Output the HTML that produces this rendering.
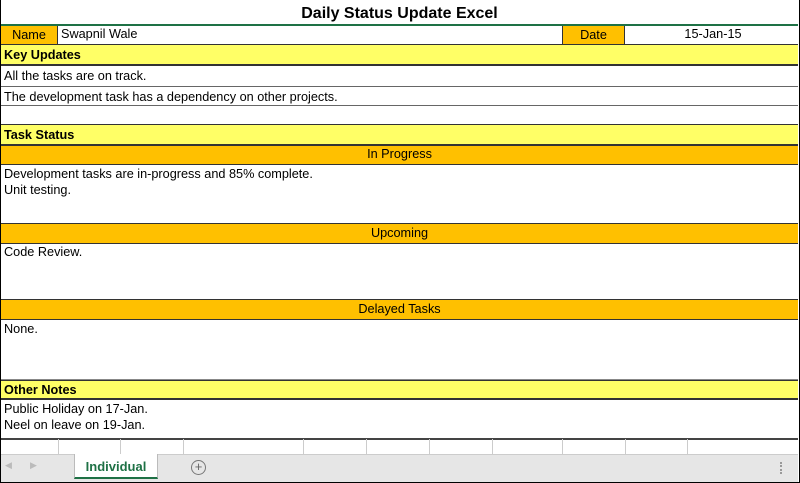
<!DOCTYPE html>
<html><head><style>
body{margin:0;width:800px;height:483px;overflow:hidden;background:#fff;font-family:"Liberation Sans",Arial,sans-serif;position:relative}
div{position:absolute;box-sizing:border-box}
.t{font-size:12.7px;color:#000;line-height:16px;padding-left:3px}
.y{background:#ffff66;font-weight:bold;font-size:12.7px;padding-left:3px;line-height:20px;left:1px;width:797px;border-bottom:2px solid #333}
.o{background:#ffc000;font-size:12.7px;text-align:center;line-height:19px;left:1px;width:797px;border-bottom:1px solid #333}
.l{left:1px;width:797px;height:1px;background:#333}
.g{top:439px;height:16px;width:1px;background:#ccc}
</style></head><body>
<div style="left:0;top:0;width:800px;height:483px;border:1px solid #000;border-top:none"></div>
<div style="left:1px;top:0;width:797px;height:25px;text-align:center;font-weight:bold;font-size:16px;line-height:28px">Daily Status Update Excel</div>
<div style="left:1px;top:24px;width:797px;height:2px;background:#1e7145"></div>
<div style="left:1px;top:26px;width:57px;height:19px;background:#ffc000;font-size:12.7px;text-align:center;line-height:19px;border-right:1px solid #333">Name</div>
<div class="t" style="left:58px;top:26px">Swapnil Wale</div>
<div style="left:562px;top:26px;width:63px;height:19px;background:#ffc000;font-size:12.7px;text-align:center;line-height:19px;border-left:1px solid #333;border-right:1px solid #333">Date</div>
<div class="t" style="left:625px;top:26px;width:173px;text-align:center">15-Jan-15</div>
<div class="l" style="top:44px"></div>
<div class="y" style="top:45px;height:21px">Key Updates</div>
<div class="t" style="left:1px;top:68px">All the tasks are on track.</div>
<div class="l" style="top:86px;background:#666"></div>
<div class="t" style="left:1px;top:89px">The development task has a dependency on other projects.</div>
<div class="l" style="top:105px;background:#666"></div>
<div class="l" style="top:124px"></div>
<div class="y" style="top:125px;height:21px">Task Status</div>
<div class="o" style="top:146px;height:19px;line-height:17px">In Progress</div>
<div class="t" style="left:1px;top:166px">Development tasks are in-progress and 85% complete.<br>Unit testing.</div>
<div class="l" style="top:223px"></div>
<div class="o" style="top:224px;height:20px">Upcoming</div>
<div class="t" style="left:1px;top:244px">Code Review.</div>
<div class="l" style="top:299px"></div>
<div class="o" style="top:300px;height:20px">Delayed Tasks</div>
<div class="t" style="left:1px;top:321px">None.</div>
<div class="l" style="top:379px;background:#888"></div>
<div class="y" style="top:380px;height:20px;border-top:1px solid #333;line-height:19px">Other Notes</div>
<div class="t" style="left:1px;top:401px">Public Holiday on 17-Jan.<br>Neel on leave on 19-Jan.</div>
<div class="l" style="top:438px;height:2px;background:#444"></div>
<div class="g" style="left:58px"></div><div class="g" style="left:120px"></div><div class="g" style="left:183px"></div><div class="g" style="left:303px"></div><div class="g" style="left:366px"></div><div class="g" style="left:429px"></div><div class="g" style="left:492px"></div><div class="g" style="left:562px"></div><div class="g" style="left:625px"></div><div class="g" style="left:687px"></div>
<div style="left:1px;top:454px;width:797px;height:28px;background:#e6e6e6;border-top:1px solid #ccc"></div>
<div style="left:5px;top:460px;font-size:9px;color:#bbb">◀</div>
<div style="left:30px;top:460px;font-size:9px;color:#bbb">▶</div>
<div style="left:74px;top:454px;width:84px;height:25px;background:#fff;border-left:1px solid #bbb;border-right:1px solid #bbb;border-bottom:2px solid #1e7145;color:#1e7145;font-weight:bold;font-size:13px;text-align:center;line-height:25px">Individual</div>
<div style="left:191px;top:460px;width:15px;height:15px;border:1px solid #777;border-radius:50%;font-size:13px;line-height:12px;text-align:center;color:#666">+</div>
<div style="left:780px;top:462px;width:2px;height:12px;border-left:2px dotted #999"></div>
</body></html>
